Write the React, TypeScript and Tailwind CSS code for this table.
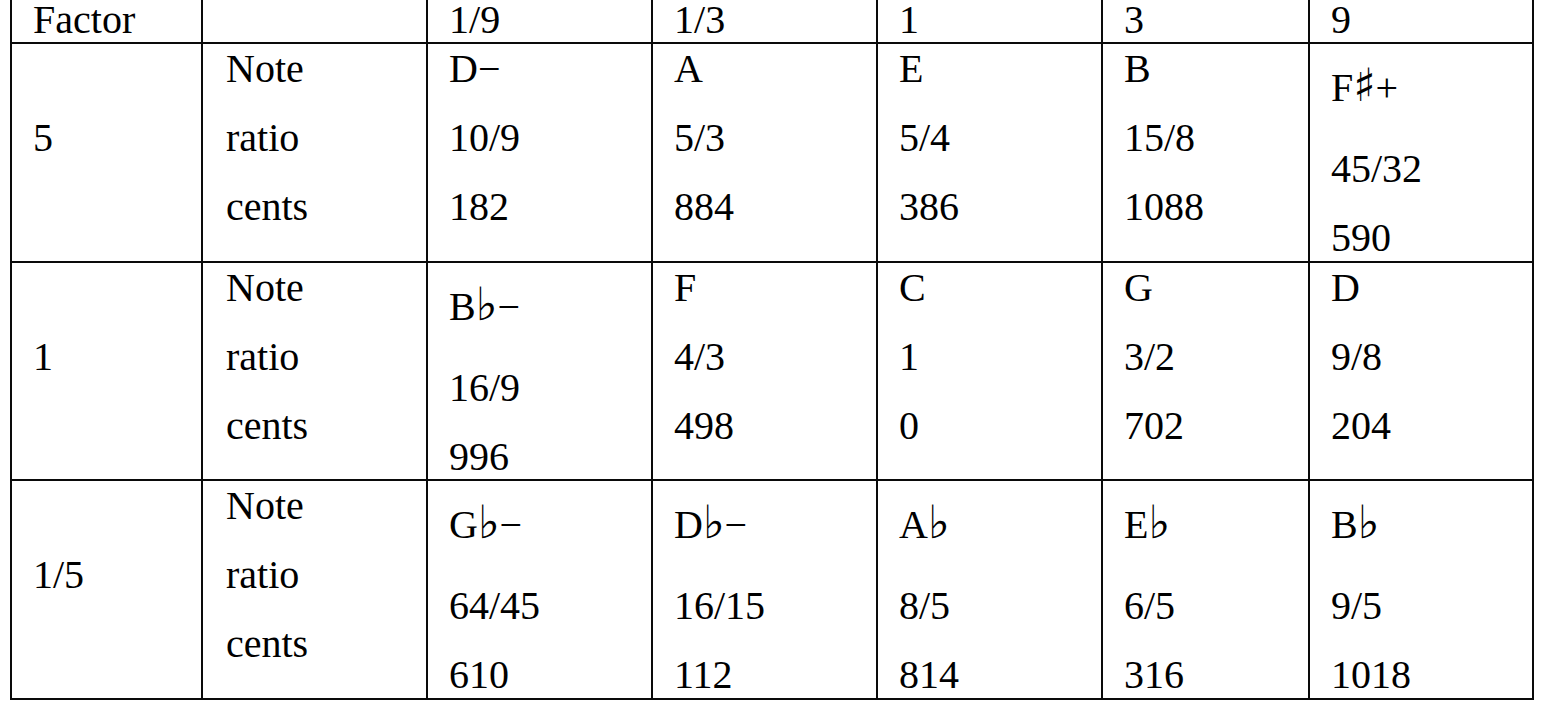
import React from "react";

type Row = { factor: string; cells: string[][] };

const header = ["Factor", "", "1/9", "1/3", "1", "3", "9"];
const labels = ["Note", "ratio", "cents"];

const rows: Row[] = [
  {
    factor: "5",
    cells: [
      ["D−", "10/9", "182"],
      ["A", "5/3", "884"],
      ["E", "5/4", "386"],
      ["B", "15/8", "1088"],
      ["F♯+", "45/32", "590"],
    ],
  },
  {
    factor: "1",
    cells: [
      ["B♭−", "16/9", "996"],
      ["F", "4/3", "498"],
      ["C", "1", "0"],
      ["G", "3/2", "702"],
      ["D", "9/8", "204"],
    ],
  },
  {
    factor: "1/5",
    cells: [
      ["G♭−", "64/45", "610"],
      ["D♭−", "16/15", "112"],
      ["A♭", "8/5", "814"],
      ["E♭", "6/5", "316"],
      ["B♭", "9/5", "1018"],
    ],
  },
];

// accidentals come from a fallback font in the original, draw them the same way
function NoteText({ text }: { text: string }) {
  return (
    <>
      {Array.from(text).map((ch, i) =>
        ch === "♭" || ch === "♯" ? (
          <span key={i} className="[font-family:DejaVu_Sans,sans-serif] text-[46px] leading-[40px]">
            {ch}
          </span>
        ) : (
          <span key={i}>{ch}</span>
        )
      )}
    </>
  );
}

function Cell({ lines, tall, wide }: { lines: string[]; tall?: boolean; wide?: boolean }) {
  return (
    <div className={wide ? "bg-white pl-[23px] pt-[5px] flex flex-col gap-[29px]" : "bg-white pl-[21px] pt-[5px] flex flex-col gap-[29px]"}>
      {lines.map((l, i) => (
        <div key={i} className={i === 0 && tall ? "h-[71px] pt-[16px] whitespace-nowrap" : "h-[40px] whitespace-nowrap"}>
          {i === 0 ? <NoteText text={l} /> : l}
        </div>
      ))}
    </div>
  );
}

export default function App() {
  return (
    <div className="min-h-screen bg-white overflow-hidden [font-family:Liberation_Serif,Times_New_Roman,serif] text-[40px] leading-[40px] text-black">
      <div className="ml-[10px] -mt-[7px] w-fit grid grid-cols-[189px_223px_223px_223px_223px_205px_222px] grid-rows-[47px_217px_216px_217px] gap-[2px] p-[2px] bg-[#0a0a0a]">
        {header.map((h, i) => (
          <Cell key={"h" + i} lines={[h]} wide={i === 1} />
        ))}
        {rows.map((r) => (
          <React.Fragment key={r.factor}>
            <Cell lines={["\u00a0", r.factor, "\u00a0"]} />
            <Cell lines={labels} wide />
            {r.cells.map((c, j) => (
              <Cell key={j} lines={c} tall={/[♭♯]/.test(c[0])} />
            ))}
          </React.Fragment>
        ))}
      </div>
    </div>
  );
}
